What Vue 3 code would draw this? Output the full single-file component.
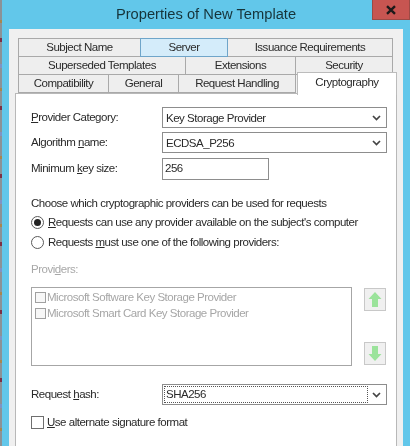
<script setup>
const tabRows = [
  [{ t: 'Subject Name', w: 123 }, { t: 'Server', w: 88, hot: true }, { t: 'Issuance Requirements', w: 166 }],
  [{ t: 'Superseded Templates', w: 168 }, { t: 'Extensions', w: 111 }, { t: 'Security', w: 98 }],
  [{ t: 'Compatibility', w: 91 }, { t: 'General', w: 71 }, { t: 'Request Handling', w: 118 }]
]
</script>

<template>
  <div class="shot">
    <div class="edge"></div>
    <div class="window">
      <header class="titlebar">
        <span class="title">Properties of New Template</span>
        <button class="close" aria-label="Close">
          <svg width="12" height="10" viewBox="0 0 12 10"><path d="M2 1.2 L10 8.8 M10 1.2 L2 8.8" stroke="#1d1a1a" stroke-width="2.4" fill="none"/></svg>
        </button>
      </header>
      <div class="client">
        <div class="tabs">
          <div v-for="(row, i) in tabRows" :key="i" class="tabrow">
            <div v-for="tab in row" :key="tab.t" class="tab" :class="{ hot: tab.hot }" :style="{ width: tab.w + 'px' }">{{ tab.t }}</div>
          </div>
          <div class="tab active">Cryptography</div>
        </div>
        <main class="page">
          <div class="formrow first">
            <label><u>P</u>rovider Category:</label>
            <div class="select"><span>Key Storage Provider</span><svg class="chev" width="9" height="6" viewBox="0 0 9 6"><path d="M1 1 L4.5 4.5 L8 1" stroke="#444" stroke-width="1.7" fill="none"/></svg></div>
          </div>
          <div class="formrow second">
            <label>Algorithm <u>n</u>ame:</label>
            <div class="select"><span>ECDSA_P256</span><svg class="chev" width="9" height="6" viewBox="0 0 9 6"><path d="M1 1 L4.5 4.5 L8 1" stroke="#444" stroke-width="1.7" fill="none"/></svg></div>
          </div>
          <div class="formrow third">
            <label>Minimum <u>k</u>ey size:</label>
            <div class="input">256</div>
          </div>
          <p class="choose">Choose which cryptographic providers can be used for requests</p>
          <div class="radio r1"><i class="dot on"></i><span><u>R</u>equests can use any provider available on the subject's computer</span></div>
          <div class="radio r2"><i class="dot"></i><span>Requests <u>m</u>ust use one of the following providers:</span></div>
          <p class="providers">Provi<u>d</u>ers:</p>
          <div class="listrow">
            <div class="list">
              <div class="item"><i class="box"></i>Microsoft Software Key Storage Provider</div>
              <div class="item"><i class="box"></i>Microsoft Smart Card Key Storage Provider</div>
            </div>
            <div class="arrows">
              <div class="arrow"><svg width="14" height="17" viewBox="0 0 14 17"><path d="M7 1 L13.5 8 H10 V16 H4 V8 H0.5 Z" fill="#9be39b"/></svg></div>
              <div class="arrow"><svg width="14" height="17" viewBox="0 0 14 17"><path d="M7 16 L13.5 9 H10 V1 H4 V9 H0.5 Z" fill="#9be39b"/></svg></div>
            </div>
          </div>
          <div class="formrow hash">
            <label>Request <u>h</u>ash:</label>
            <div class="select focus"><span class="focusbox">SHA256</span><svg class="chev" width="9" height="6" viewBox="0 0 9 6"><path d="M1 1 L4.5 4.5 L8 1" stroke="#444" stroke-width="1.7" fill="none"/></svg></div>
          </div>
          <div class="check"><i class="box big"></i><span><u>U</u>se alternate signature format</span></div>
        </main>
      </div>
    </div>
  </div>
</template>

<style scoped>
.shot {
  width: 410px;
  height: 446px;
  display: flex;
  overflow: hidden;
  background: #62c7ea;
  font-family: "Liberation Sans", Arial, sans-serif;
  font-size: 11.5px;
  letter-spacing: -0.48px;
  color: #2a2a2a;
  filter: blur(0.55px);
}
.edge {
  width: 2px;
  flex: none;
  background: repeating-linear-gradient(180deg, #8b9297 0 20px, #a8864f 20px 23px, #8b9297 23px 38px, #7d3045 38px 42px, #8b9297 42px 64px, #7f93c4 64px 68px);
}
.window {
  flex: 1;
  display: flex;
  flex-direction: column;
  min-width: 0;
}
.titlebar {
  height: 29px;
  flex: none;
  position: relative;
  display: flex;
  justify-content: center;
  padding: 2px 0 0;
  box-sizing: border-box;
}
.title {
  font-size: 14.7px;
  letter-spacing: 0;
  line-height: 24px;
  color: #16343a;
}
.close {
  position: absolute;
  right: 0;
  top: -1px;
  width: 38px;
  height: 21px;
  padding: 0;
  border: 1px solid #9b4a45;
  background: #c75551;
  display: flex;
  align-items: center;
  justify-content: center;
}
.client {
  margin-left: 7px;
  margin-right: 7px;
  flex: 1;
  background: #f0f0f0;
  padding: 9px 6px 0;
  box-sizing: border-box;
  display: flex;
  flex-direction: column;
  min-height: 0;
}
.tabs {
  position: relative;
  padding-left: 3px;
  flex: none;
}
.tabrow {
  display: flex;
  height: 18px;
}
.tab {
  box-sizing: border-box;
  height: 19px;
  border: 1px solid #a9a9a9;
  background: #eeeeee;
  text-align: center;
  line-height: 17px;
  white-space: nowrap;
  margin-right: -1px;
}
.tab.hot {
  background: #d4ecfa;
  border-color: #6fa5c9;
  position: relative;
}
.tab.active {
  position: absolute;
  right: 0;
  top: 34px;
  width: 100px;
  height: 23px;
  background: #fff;
  border-color: #bcbcbc;
  border-bottom: none;
  line-height: 19px;
  margin: 0;
  z-index: 2;
}
.page {
  flex: 1;
  background: #fff;
  border: 1px solid #b8b8b8;
  border-bottom: none;
  box-sizing: border-box;
  padding: 0 9px 0 15px;
  margin-top: 1px;
  min-height: 0;
}
.formrow {
  display: flex;
  align-items: center;
}
.formrow label { width: 131px; flex: none; position: relative; top: -1px; }
.first { margin-top: 13px; }
.second { margin-top: 4px; }
.third { margin-top: 5px; }
.hash { margin-top: 18px; }
.select {
  width: 226px;
  height: 21px;
  box-sizing: border-box;
  border: 1px solid #8d8d8d;
  display: flex;
  align-items: center;
  justify-content: space-between;
  padding: 0 5px 0 3px;
  background: #fff;
}
.input {
  width: 107px;
  height: 22px;
  box-sizing: border-box;
  border: 1px solid #8d8d8d;
  padding-left: 2px;
  line-height: 19px;
}
.select.focus { padding-left: 2px; }
.focusbox {
  width: 202px;
  height: 15px;
  line-height: 15px;
  box-sizing: border-box;
  outline: 1px dotted #555;
  padding-left: 1px;
  display: block;
}
p { margin: 0; }
.choose { margin-top: 15px; line-height: 16px; }
.radio {
  display: flex;
  align-items: center;
  gap: 4px;
  height: 16px;
  line-height: 16px;
  white-space: nowrap;
}
.r1 { margin-top: 3px; }
.r2 { margin-top: 4px; }
.dot {
  width: 13px;
  height: 13px;
  box-sizing: border-box;
  border: 1px solid #5a5a5a;
  border-radius: 50%;
  flex: none;
  display: flex;
  align-items: center;
  justify-content: center;
}
.dot.on::after {
  content: "";
  width: 7px;
  height: 7px;
  border-radius: 50%;
  background: #222;
}
.providers { margin-top: 11px; color: #a8a8a8; line-height: 16px; }
.listrow {
  display: flex;
  margin-top: 10px;
  gap: 12px;
}
.list {
  width: 321px;
  height: 79px;
  box-sizing: border-box;
  border: 1px solid #a6a6a6;
  padding-top: 1px;
  padding-left: 3px;
  color: #a6a6a6;
}
.item {
  display: flex;
  align-items: center;
  gap: 1px;
  height: 16px;
}
.box {
  width: 11px;
  height: 11px;
  box-sizing: border-box;
  border: 1px solid #a0a0a0;
  flex: none;
  background: #f7f7f7;
}
.arrows {
  display: flex;
  flex-direction: column;
  justify-content: space-between;
  height: 77px;
  margin-top: 1px;
}
.arrow {
  width: 22px;
  height: 23px;
  box-sizing: border-box;
  border: 1px solid #c8c8c8;
  background: #f0f0f0;
  display: flex;
  align-items: center;
  justify-content: center;
}
.check {
  display: flex;
  align-items: center;
  gap: 3px;
  margin-top: 9px;
  height: 16px;
}
.box.big {
  width: 13px;
  height: 13px;
  border-color: #6f6f6f;
  background: #fff;
}
</style>
